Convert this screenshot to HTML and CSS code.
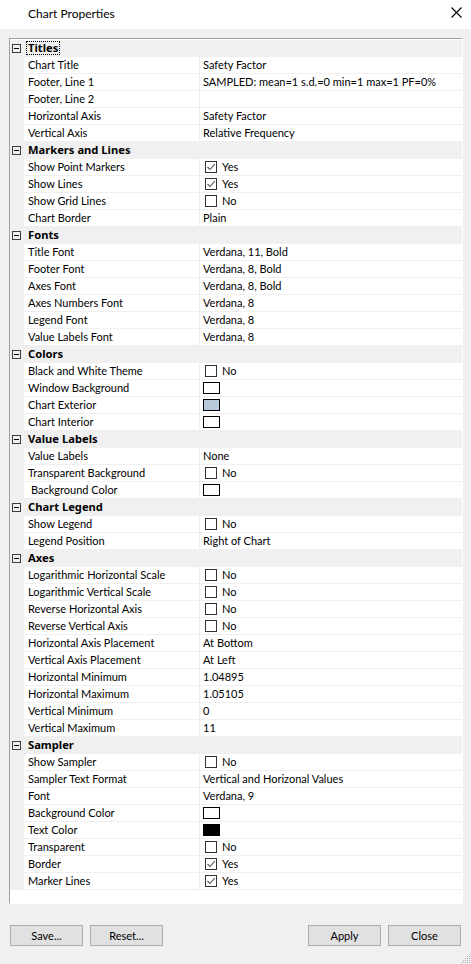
FILE: index.html
```html
<!DOCTYPE html>
<html>
<head>
<meta charset="utf-8">
<title>Chart Properties</title>
<link rel="stylesheet" href="styles.css">
</head>
<body>
<div class="dialog">
  <div class="titlebar">
    <span class="title">Chart Properties</span>
    <svg class="close" width="11" height="11" viewBox="0 0 11 11"><path d="M0.5 0.5 L10.5 10.5 M10.5 0.5 L0.5 10.5" stroke="#000" stroke-width="1.1" fill="none"/></svg>
  </div>

  <div class="grid">
    <div class="cat"><span class="exp"></span><span class="catname focus">Titles</span></div>
    <div class="row"><div class="name">Chart Title</div><div class="val">Safety Factor</div></div>
    <div class="row"><div class="name">Footer, Line 1</div><div class="val">SAMPLED: mean=1 s.d.=0 min=1 max=1 PF=0%</div></div>
    <div class="row"><div class="name">Footer, Line 2</div><div class="val"></div></div>
    <div class="row"><div class="name">Horizontal Axis</div><div class="val">Safety Factor</div></div>
    <div class="row"><div class="name">Vertical Axis</div><div class="val">Relative Frequency</div></div>

    <div class="cat"><span class="exp"></span><span class="catname">Markers and Lines</span></div>
    <div class="row"><div class="name">Show Point Markers</div><div class="val"><span class="cb on"><svg viewBox="0 0 10 10"><path d="M1.5 5 L4 7.5 L8.8 2.2" stroke="#5a5a5a" stroke-width="1.1" fill="none"/></svg></span>Yes</div></div>
    <div class="row"><div class="name">Show Lines</div><div class="val"><span class="cb on"><svg viewBox="0 0 10 10"><path d="M1.5 5 L4 7.5 L8.8 2.2" stroke="#5a5a5a" stroke-width="1.1" fill="none"/></svg></span>Yes</div></div>
    <div class="row"><div class="name">Show Grid Lines</div><div class="val"><span class="cb"></span>No</div></div>
    <div class="row"><div class="name">Chart Border</div><div class="val">Plain</div></div>

    <div class="cat"><span class="exp"></span><span class="catname">Fonts</span></div>
    <div class="row"><div class="name">Title Font</div><div class="val">Verdana, 11, Bold</div></div>
    <div class="row"><div class="name">Footer Font</div><div class="val">Verdana, 8, Bold</div></div>
    <div class="row"><div class="name">Axes Font</div><div class="val">Verdana, 8, Bold</div></div>
    <div class="row"><div class="name">Axes Numbers Font</div><div class="val">Verdana, 8</div></div>
    <div class="row"><div class="name">Legend Font</div><div class="val">Verdana, 8</div></div>
    <div class="row"><div class="name">Value Labels Font</div><div class="val">Verdana, 8</div></div>

    <div class="cat"><span class="exp"></span><span class="catname">Colors</span></div>
    <div class="row"><div class="name">Black and White Theme</div><div class="val"><span class="cb"></span>No</div></div>
    <div class="row"><div class="name">Window Background</div><div class="val"><span class="sw"></span></div></div>
    <div class="row"><div class="name">Chart Exterior</div><div class="val"><span class="sw blue"></span></div></div>
    <div class="row"><div class="name">Chart Interior</div><div class="val"><span class="sw"></span></div></div>

    <div class="cat"><span class="exp"></span><span class="catname">Value Labels</span></div>
    <div class="row"><div class="name">Value Labels</div><div class="val">None</div></div>
    <div class="row"><div class="name">Transparent Background</div><div class="val"><span class="cb"></span>No</div></div>
    <div class="row"><div class="name indent">Background Color</div><div class="val"><span class="sw"></span></div></div>

    <div class="cat"><span class="exp"></span><span class="catname">Chart Legend</span></div>
    <div class="row"><div class="name">Show Legend</div><div class="val"><span class="cb"></span>No</div></div>
    <div class="row"><div class="name">Legend Position</div><div class="val">Right of Chart</div></div>

    <div class="cat"><span class="exp"></span><span class="catname">Axes</span></div>
    <div class="row"><div class="name">Logarithmic Horizontal Scale</div><div class="val"><span class="cb"></span>No</div></div>
    <div class="row"><div class="name">Logarithmic Vertical Scale</div><div class="val"><span class="cb"></span>No</div></div>
    <div class="row"><div class="name">Reverse Horizontal Axis</div><div class="val"><span class="cb"></span>No</div></div>
    <div class="row"><div class="name">Reverse Vertical Axis</div><div class="val"><span class="cb"></span>No</div></div>
    <div class="row"><div class="name">Horizontal Axis Placement</div><div class="val">At Bottom</div></div>
    <div class="row"><div class="name">Vertical Axis Placement</div><div class="val">At Left</div></div>
    <div class="row"><div class="name">Horizontal Minimum</div><div class="val">1.04895</div></div>
    <div class="row"><div class="name">Horizontal Maximum</div><div class="val">1.05105</div></div>
    <div class="row"><div class="name">Vertical Minimum</div><div class="val">0</div></div>
    <div class="row"><div class="name">Vertical Maximum</div><div class="val">11</div></div>

    <div class="cat"><span class="exp"></span><span class="catname">Sampler</span></div>
    <div class="row"><div class="name">Show Sampler</div><div class="val"><span class="cb"></span>No</div></div>
    <div class="row"><div class="name">Sampler Text Format</div><div class="val">Vertical and Horizonal Values</div></div>
    <div class="row"><div class="name">Font</div><div class="val">Verdana, 9</div></div>
    <div class="row"><div class="name">Background Color</div><div class="val"><span class="sw"></span></div></div>
    <div class="row"><div class="name">Text Color</div><div class="val"><span class="sw black"></span></div></div>
    <div class="row"><div class="name">Transparent</div><div class="val"><span class="cb"></span>No</div></div>
    <div class="row"><div class="name">Border</div><div class="val"><span class="cb on"><svg viewBox="0 0 10 10"><path d="M1.5 5 L4 7.5 L8.8 2.2" stroke="#5a5a5a" stroke-width="1.1" fill="none"/></svg></span>Yes</div></div>
    <div class="row"><div class="name">Marker Lines</div><div class="val"><span class="cb on"><svg viewBox="0 0 10 10"><path d="M1.5 5 L4 7.5 L8.8 2.2" stroke="#5a5a5a" stroke-width="1.1" fill="none"/></svg></span>Yes</div></div>
  </div>

  <div class="buttons">
    <button class="btn">Save...</button>
    <button class="btn">Reset...</button>
    <span class="spacer"></span>
    <button class="btn">Apply</button>
    <button class="btn">Close</button>
  </div>

  <svg class="grip" width="11" height="11" viewBox="0 0 11 11">
    <g fill="#b0b0b0">
      <rect x="9" y="1" width="1" height="1"/>
      <rect x="7" y="3" width="1" height="1"/><rect x="9" y="3" width="1" height="1"/>
      <rect x="5" y="5" width="1" height="1"/><rect x="7" y="5" width="1" height="1"/><rect x="9" y="5" width="1" height="1"/>
      <rect x="3" y="7" width="1" height="1"/><rect x="5" y="7" width="1" height="1"/><rect x="7" y="7" width="1" height="1"/><rect x="9" y="7" width="1" height="1"/>
      <rect x="1" y="9" width="1" height="1"/><rect x="3" y="9" width="1" height="1"/><rect x="5" y="9" width="1" height="1"/><rect x="7" y="9" width="1" height="1"/><rect x="9" y="9" width="1" height="1"/>
    </g>
  </svg>
</div>
</body>
</html>
```

FILE: styles.css
```css
html, body {
  margin: 0;
  padding: 0;
}
body {
  background: #f0f0f0;
  font-family: Lato, "Noto Sans", sans-serif;
  font-size: 11px;
  color: #000;
}
.dialog {
  position: relative;
  width: 471px;
  height: 964px;
  overflow: hidden;
}
.titlebar {
  height: 29px;
  background: #fff;
  display: flex;
  align-items: center;
  padding-left: 28px;
  padding-right: 9px;
  box-sizing: border-box;
}
.title {
  flex: 1;
  font-size: 12px;
  line-height: 16px;
  margin-top: -2px;
}
.close {
  display: block;
  margin-top: -4px;
}
.grid {
  margin: 9px 0 0 9px;
  width: 454px;
  height: 866px;
  box-sizing: border-box;
  border-top: 1px solid #a0a0a0;
  border-left: 1px solid #a0a0a0;
  border-right: 1px solid #fff;
  border-bottom: 1px solid #fff;
  background: #fff;
  padding-top: 1px;
  display: flex;
  flex-direction: column;
}
.cat {
  height: 16px;
  border-bottom: 1px solid #f0f0f0;
  background: #f0f0f0;
  display: flex;
  align-items: center;
  flex: none;
}
.exp {
  width: 9px;
  height: 9px;
  box-sizing: border-box;
  border: 1px solid #3c3c3c;
  margin-left: 2px;
  position: relative;
  flex: none;
}
.exp::after {
  content: "";
  position: absolute;
  left: 1px;
  right: 1px;
  top: 3px;
  height: 1px;
  background: #000;
}
.catname {
  font-family: "Noto Sans", "Open Sans", sans-serif;
  font-weight: bold;
  font-size: 11.2px;
  margin-left: 5px;
  line-height: 12px;
  padding: 0 1px;
  border: 1px solid transparent;
}
.catname.focus {
  border: 1px dotted #000;
}
.row {
  height: 16px;
  border-bottom: 1px solid #f0f0f0;
  background: #f0f0f0;
  display: flex;
  padding-left: 14px;
  gap: 1px;
  flex: none;
}
.name {
  width: 175px;
  flex: none;
  background: #fff;
  padding-left: 4px;
  box-sizing: border-box;
  line-height: 16px;
  white-space: nowrap;
  overflow: hidden;
}
.name.indent {
  padding-left: 7px;
}
.val {
  flex: 1;
  background: #fff;
  padding-left: 3px;
  line-height: 16px;
  white-space: nowrap;
  overflow: hidden;
  display: flex;
  align-items: center;
}
.cb {
  width: 12px;
  height: 12px;
  box-sizing: border-box;
  border: 1px solid #333;
  background: #fff;
  margin-left: 2px;
  margin-right: 5px;
  flex: none;
  display: flex;
  align-items: center;
  justify-content: center;
}
.cb svg {
  width: 10px;
  height: 10px;
  display: block;
}
.sw {
  width: 17px;
  height: 12px;
  box-sizing: border-box;
  border: 1px solid #000;
  background: #fff;
  flex: none;
}
.sw.blue {
  background: #b9c9dc;
}
.sw.black {
  background: #000;
}
.buttons {
  display: flex;
  gap: 7px;
  padding: 0 10px;
  margin-top: 21px;
}
.spacer {
  flex: 1;
}
.btn {
  width: 73px;
  height: 21px;
  box-sizing: border-box;
  background: #e1e1e1;
  border: 1px solid #adadad;
  font-family: Lato, "Noto Sans", sans-serif;
  font-size: 11px;
  color: #000;
  padding: 0;
  margin: 0;
  line-height: 18px;
}
.grip {
  position: absolute;
  right: 0;
  bottom: 0;
}
```
